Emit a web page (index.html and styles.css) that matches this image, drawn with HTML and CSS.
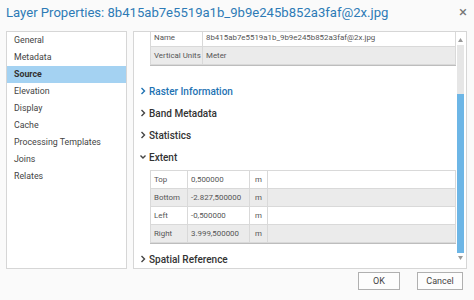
FILE: index.html
```html
<!DOCTYPE html>
<html lang="en">
<head>
  <meta charset="UTF-8" />
  <title>Layer Properties</title>
  <link rel="stylesheet" href="styles.css">
</head>
<body>
<div class="dialog">
  <div class="titlebar">
    <span class="title">Layer Properties: 8b415ab7e5519a1b_9b9e245b852a3faf@2x.jpg</span>
    <span class="close">&times;</span>
  </div>

  <div class="main">
    <ul class="nav">
      <li>General</li>
      <li>Metadata</li>
      <li class="selected">Source</li>
      <li>Elevation</li>
      <li>Display</li>
      <li>Cache</li>
      <li>Processing Templates</li>
      <li>Joins</li>
      <li>Relates</li>
    </ul>

    <div class="panel">
      <div class="scrollarea">
        <div class="content">
          <table class="props info">
            <tr><td class="key">Name</td><td>8b415ab7e5519a1b_9b9e245b852a3faf@2x.jpg</td></tr>
            <tr class="alt"><td class="key">Vertical Units</td><td>Meter</td></tr>
          </table>

          <div class="section link">
            <svg class="chev" width="6" height="8" viewBox="0 0 6 8"><polyline points="1.5,1 4.5,4 1.5,7" fill="none" stroke="currentColor" stroke-width="1.4"/></svg>
            <span>Raster Information</span>
          </div>
          <div class="section">
            <svg class="chev" width="6" height="8" viewBox="0 0 6 8"><polyline points="1.5,1 4.5,4 1.5,7" fill="none" stroke="currentColor" stroke-width="1.4"/></svg>
            <span>Band Metadata</span>
          </div>
          <div class="section">
            <svg class="chev" width="6" height="8" viewBox="0 0 6 8"><polyline points="1.5,1 4.5,4 1.5,7" fill="none" stroke="currentColor" stroke-width="1.4"/></svg>
            <span>Statistics</span>
          </div>
          <div class="section">
            <svg class="chev" width="6" height="8" viewBox="0 0 6 8"><polyline points="0.5,2.5 3,5 5.5,2.5" fill="none" stroke="currentColor" stroke-width="1.4"/></svg>
            <span>Extent</span>
          </div>

          <table class="props extent">
            <tr><td class="key">Top</td><td class="num">0,500000</td><td class="unit">m</td><td></td></tr>
            <tr class="alt"><td class="key">Bottom</td><td class="num">-2.827,500000</td><td class="unit">m</td><td></td></tr>
            <tr><td class="key">Left</td><td class="num">-0,500000</td><td class="unit">m</td><td></td></tr>
            <tr class="alt"><td class="key">Right</td><td class="num">3.999,500000</td><td class="unit">m</td><td></td></tr>
          </table>

          <div class="section last">
            <svg class="chev" width="6" height="8" viewBox="0 0 6 8"><polyline points="1.5,1 4.5,4 1.5,7" fill="none" stroke="currentColor" stroke-width="1.4"/></svg>
            <span>Spatial Reference</span>
          </div>
        </div>
      </div>

      <div class="scrollbar">
        <svg class="arrow" width="7" height="6" viewBox="0 0 7 6"><polygon points="3.5,1 6,5 1,5" fill="#9a9a9a"/></svg>
        <div class="track"><div class="thumb"></div></div>
        <svg class="arrow" width="7" height="6" viewBox="0 0 7 6"><polygon points="1,1 6,1 3.5,5" fill="#9a9a9a"/></svg>
      </div>
    </div>
  </div>

  <div class="buttons">
    <button class="ok">OK</button>
    <button class="cancel">Cancel</button>
  </div>
</div>
</body>
</html>
```

FILE: styles.css
```css
* { box-sizing: border-box; }
body {
  margin: 0;
  font-family: Roboto, "Open Sans", sans-serif;
  background-color: #fafafa;
  color: #333;
  width: 474px;
  height: 300px;
  overflow: hidden;
}
.titlebar {
  height: 25px;
  display: flex;
  align-items: center;
  justify-content: space-between;
  padding: 0 7px 0 6px;
}
.title {
  font-size: 13.1px;
  color: #2d7ab6;
  white-space: nowrap;
}
.close {
  font-size: 15px;
  color: #777;
  margin-top: -1px;
}
.main {
  display: flex;
  gap: 6px;
  height: 238px;
  margin-top: 6px;
  padding: 0 7px 0 6px;
}
.nav {
  list-style: none;
  margin: 0;
  padding: 0;
  width: 121px;
  background-color: #fff;
  border: 1px solid #d6d6d6;
}
.nav li {
  height: 17px;
  line-height: 17px;
  padding-left: 7px;
  font-size: 8.8px;
  color: #444;
}
.nav li.selected {
  background-color: #a4d2f2;
  font-weight: 700;
  color: #333;
}
.panel {
  flex: 1;
  display: flex;
  background-color: #fff;
  border: 1px solid #d6d6d6;
}
.scrollarea {
  flex: 1;
  overflow: hidden;
}
.content {
  margin-top: -4px;
}
.props {
  border-collapse: collapse;
  margin-left: 16px;
  width: 306px;
  font-size: 7.9px;
  color: #555;
  box-shadow: 0 1px 0 #bdbdbd;
}
.props td {
  height: 18px;
  padding: 0 0 0 3px;
  border: 1px solid #d9d9d9;
  white-space: nowrap;
}
.props tr.alt td {
  background-color: #ebebeb;
}
.info .key { width: 52px; }
.extent { margin-top: 2px; }
.extent .key { width: 37px; }
.extent .num { width: 62px; }
.extent .unit { width: 18px; padding-left: 5px; }
.section {
  height: 22px;
  display: flex;
  align-items: center;
  gap: 3px;
  padding-left: 6px;
  font-size: 10px;
  font-weight: 500;
  color: #333;
}
.section .chev { color: #444; }
.section.link { margin-top: 15px; color: #1e72b3; }
.section.link .chev { color: #1e72b3; }
.section.last { margin-top: 5px; }
.scrollbar {
  width: 10px;
  display: flex;
  flex-direction: column;
  align-items: center;
  padding: 5px 2px 7px 1px;
}
.arrow { flex: none; }
.track {
  flex: 1;
  width: 7px;
  margin: 2px 0;
  background-color: #e6e6e6;
  display: flex;
  flex-direction: column;
  justify-content: flex-end;
}
.thumb {
  height: 159px;
  background-color: #6db6e6;
}
.buttons {
  display: flex;
  justify-content: flex-end;
  gap: 17px;
  padding: 3px 11px 0 0;
}
.buttons button {
  height: 18px;
  border: 1px solid #b0b0b0;
  background-color: #fdfdfd;
  font-family: Roboto, "Open Sans", sans-serif;
  font-size: 9px;
  color: #444;
  padding: 0;
}
.ok { width: 42px; }
.cancel { width: 46px; }
```
